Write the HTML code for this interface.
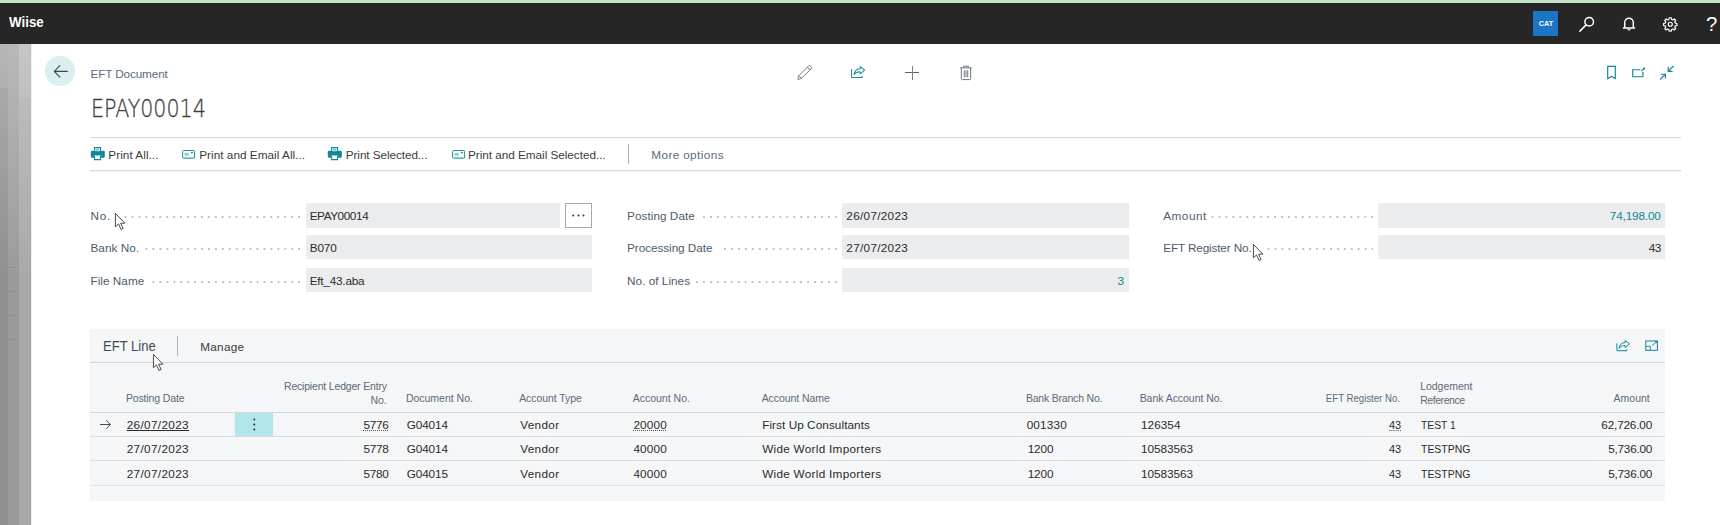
<!DOCTYPE html>
<html lang="en"><head><meta charset="utf-8"><title>EFT Document - EPAY00014</title>
<style>
html,body{margin:0;padding:0;background:#fff;}
body{width:1720px;height:525px;position:relative;overflow:hidden;font-family:"Liberation Sans",sans-serif;}
.b{position:absolute;display:block;}
.t{position:absolute;white-space:pre;display:block;}
.f{position:absolute;height:24.6px;background:#ebecee;}
.d{position:absolute;height:1.6px;background-image:linear-gradient(90deg,#bfc4ca 0,#bfc4ca 1.5px,rgba(191,196,202,0) 1.5px);background-size:6.95px 1.6px;background-repeat:repeat-x;}
</style></head><body>
<!-- top strips -->
<div class="b" style="left:0;top:0;width:1720px;height:3px;background:#c4e3c6"></div>
<div class="b" style="left:0;top:3px;width:1720px;height:40.75px;background:#262626"></div>
<!-- left gray strip -->
<div class="b" style="left:0;top:43.75px;width:8px;height:482px;background:linear-gradient(#b6b6b6 0,#959696 235px,#959696 100%)"></div>
<div class="b" style="left:8px;top:43.75px;width:11px;height:482px;background:linear-gradient(#b9b9b9 0,#9a9a9a 235px,#9a9a9a 100%)"></div>
<div class="b" style="left:19px;top:43.75px;width:12.3px;height:482px;background:linear-gradient(#c6c6c6 0,#aeaeae 235px,#aeaeae 100%)"></div>
<div class="b" style="left:30.4px;top:43.75px;width:0.9px;height:482px;background:linear-gradient(rgba(0,0,0,.02) 0,rgba(0,0,0,.08) 235px)"></div><div class="b" style="left:31.3px;top:43.75px;width:0.6px;height:482px;background:rgba(0,0,0,.06)"></div>
<div class="b" style="left:0;top:88.2px;width:8px;height:437px;background:rgba(0,0,0,.04)"></div>
<div class="b" style="left:19px;top:98.3px;width:11.4px;height:427px;background:rgba(0,0,0,.025)"></div>
<div class="b" style="left:8px;top:267px;width:11px;height:1px;background:#919191"></div>
<div class="b" style="left:8px;top:291px;width:11px;height:1px;background:#919191"></div>
<div class="b" style="left:8px;top:315px;width:11px;height:1px;background:#919191"></div>
<div class="b" style="left:8px;top:339px;width:11px;height:1px;background:#919191"></div>

<!-- CAT badge -->
<div class="b" style="left:1533px;top:11px;width:25px;height:25px;background:#1b74c5"></div>

<!-- top-bar icons -->
<svg class="b" style="left:1578px;top:15px" width="18" height="18" viewBox="0 0 18 18" fill="none" stroke="#fff" stroke-width="1.5"><circle cx="11.2" cy="6.8" r="4.3"/><path d="M8.1 9.9 L1.9 16.1" stroke-linecap="round"/></svg>
<svg class="b" style="left:1621px;top:14.6px" width="16" height="18" viewBox="0 0 16 18" fill="none" stroke="#fff" stroke-width="1.5"><path d="M3.7 13 V7.6 a4.3 4.3 0 0 1 8.6 0 V13 M1.8 13.1 H14.2" /><path d="M6.6 14.3 a1.5 1.1 0 0 0 2.8 0" stroke-width="1.1"/></svg>
<svg class="b" style="left:1661.9px;top:15.5px" width="16.5" height="16.5" viewBox="0 0 18 18" fill="none" stroke="#fff"><circle cx="9" cy="9" r="2.2" stroke-width="1.3"/><path stroke-width="1.3" stroke-linejoin="round" d="M7.9 1.9 h2.2 l.4 1.9 1.3 .55 1.65 -1.1 1.55 1.55 -1.1 1.65 .55 1.3 1.9 .4 v2.2 l-1.9 .4 -.55 1.3 1.1 1.65 -1.55 1.55 -1.65 -1.1 -1.3 .55 -.4 1.9 h-2.2 l-.4 -1.9 -1.3 -.55 -1.65 1.1 -1.55 -1.55 1.1 -1.65 -.55 -1.3 -1.9 -.4 v-2.2 l1.9 -.4 .55 -1.3 -1.1 -1.65 1.55 -1.55 1.65 1.1 1.3 -.55z"/></svg>

<!-- back button -->
<div class="b" style="left:45.3px;top:56.3px;width:29.8px;height:29.8px;border-radius:50%;background:#dbeff3"></div>
<svg class="b" style="left:53px;top:64px" width="16" height="15" viewBox="0 0 16 15" fill="none" stroke="#454545" stroke-width="1.15"><path d="M1.3 7.4 H14.8 M7.2 1.4 L1.3 7.4 L7.2 13.4"/></svg>

<!-- header centre icons -->
<svg class="b" style="left:796px;top:64px" width="18" height="18" viewBox="0 0 18 18" fill="none" stroke="#687482" stroke-width="0.95" stroke-linejoin="round"><path d="M1.8 15.4 L2.9 11.6 L12.4 2.1 a1.45 1.45 0 0 1 2.1 0 l.6 .6 a1.45 1.45 0 0 1 0 2.1 L5.6 14.3 Z M2.9 11.6 L5.6 14.3 M11.3 3.2 L14 5.9"/></svg>
<svg class="b" style="left:850px;top:65px" width="17" height="14" viewBox="0 0 17 14" fill="none" stroke="#1a8d99" stroke-width="1.05" stroke-linejoin="round"><path d="M1.6 4.3 V12.4 H12.2 V11"/><path d="M10.2 1.6 L14.6 5.2 L10.2 8.8 V6.7 C7.4 6.6 5.4 7.6 4.2 9.6 C4.4 6 6.6 3.9 10.2 3.7 Z"/></svg>
<div class="b" style="left:905px;top:72px;width:14.4px;height:1.1px;background:#5a626e"></div>
<div class="b" style="left:911.7px;top:65.6px;width:1px;height:14.2px;background:#7b828d"></div>
<svg class="b" style="left:958px;top:64px" width="16" height="18" viewBox="0 0 16 18" fill="none" stroke="#687482" stroke-width="1"><path d="M2 3.9 H14 M5.7 3.7 V2.2 H10.3 V3.7 M3.3 4.1 V14.6 a1 1 0 0 0 1 1 H11.7 a1 1 0 0 0 1 -1 V4.1"/><path d="M6.3 6.3 V13.3 M8 6.3 V13.3 M9.7 6.3 V13.3" stroke-width="1.1" stroke="#7d8792"/></svg>

<!-- header right icons -->
<svg class="b" style="left:1606px;top:64px" width="12" height="17" viewBox="0 0 12 17" fill="none" stroke="#0f8794" stroke-width="1.15"><path d="M1.7 2.3 H9.3 V14.5 L5.5 12.5 L1.7 14.5 Z"/></svg>
<svg class="b" style="left:1631px;top:65px" width="16" height="14" viewBox="0 0 16 14" fill="none" stroke="#0f8794" stroke-width="1.15"><path d="M9.4 4.7 H1.7 V11.7 H11.9 V7 M10.3 6.2 L12.8 3.8"/><circle cx="13.1" cy="3.6" r="1.1" fill="#0f8794" stroke="none"/></svg>
<svg class="b" style="left:1659px;top:65px" width="16" height="16" viewBox="0 0 16 16" fill="none" stroke="#0f8794" stroke-width="1.15"><path d="M14.6 1 L9.4 6.2 M9.2 2 V6.4 H13.6 M1 14.6 L6.2 9.4 M2 9.2 H6.4 V13.6"/></svg>

<!-- action bar lines -->
<div class="b" style="left:90px;top:137px;width:1591px;height:1.2px;background:#d4d8dc"></div>
<div class="b" style="left:90px;top:170px;width:1591px;height:1.2px;background:#d4d8dc"></div><div class="b" style="left:90px;top:171.2px;width:1591px;height:1px;background:#f1f2f4"></div>
<div class="b" style="left:628px;top:144.3px;width:1px;height:19.4px;background:#aeb2b8"></div>

<!-- action bar icons -->
<svg class="b" id="pr1" style="left:90px;top:146px" width="16" height="15" viewBox="0 0 16 15"><path fill="#0f8794" d="M2.1 4.8 H13.5 a1.3 1.3 0 0 1 1.3 1.3 V10.5 a1.3 1.3 0 0 1 -1.3 1.3 H11.1 V9.5 H4 V11.8 H2.1 a1.3 1.3 0 0 1 -1.3 -1.3 V6.1 a1.3 1.3 0 0 1 1.3 -1.3 Z"/><g fill="none" stroke="#0f8794" stroke-width="1.05"><path d="M4.6 4.8 V1.6 H10.5 V4.8"/><path d="M4.6 9.7 V13.6 H10.5 V9.7"/></g><path d="M5.9 3.5 H9.2" stroke="#6fbcc4" stroke-width="1.2"/><path d="M5.2 5.4 H9.9" stroke="#5fb3bc" stroke-width=".6"/></svg>
<svg class="b" style="left:327px;top:146px" width="16" height="15" viewBox="0 0 16 15"><path fill="#0f8794" d="M2.1 4.8 H13.5 a1.3 1.3 0 0 1 1.3 1.3 V10.5 a1.3 1.3 0 0 1 -1.3 1.3 H11.1 V9.5 H4 V11.8 H2.1 a1.3 1.3 0 0 1 -1.3 -1.3 V6.1 a1.3 1.3 0 0 1 1.3 -1.3 Z"/><g fill="none" stroke="#0f8794" stroke-width="1.05"><path d="M4.6 4.8 V1.6 H10.5 V4.8"/><path d="M4.6 9.7 V13.6 H10.5 V9.7"/></g><path d="M5.9 3.5 H9.2" stroke="#6fbcc4" stroke-width="1.2"/><path d="M5.2 5.4 H9.9" stroke="#5fb3bc" stroke-width=".6"/></svg>
<svg class="b" style="left:181px;top:149px" width="15" height="11" viewBox="0 0 15 11" fill="none" stroke="#0f8794"><rect x="1.6" y="1.55" width="12" height="7.65" rx=".9" stroke="#1a8d99" stroke-width="1"/><rect x="3.5" y="3.9" width="4.2" height="2.7" fill="#8ccbd2" stroke="none"/><rect x="10" y="2.9" width="1.9" height="1.3" fill="#0f8794" stroke="none"/><path d="M2.4 8.2 H12.8" stroke="#7cc4cb" stroke-width=".7"/></svg>
<svg class="b" style="left:450.5px;top:149px" width="15" height="11" viewBox="0 0 15 11" fill="none" stroke="#0f8794"><rect x="1.6" y="1.55" width="12" height="7.65" rx=".9" stroke="#1a8d99" stroke-width="1"/><rect x="3.5" y="3.9" width="4.2" height="2.7" fill="#8ccbd2" stroke="none"/><rect x="10" y="2.9" width="1.9" height="1.3" fill="#0f8794" stroke="none"/><path d="M2.4 8.2 H12.8" stroke="#7cc4cb" stroke-width=".7"/></svg>

<!-- form fields -->
<div class="f" style="left:306px;top:203px;height:24.7px;width:254px"></div>
<div class="f" style="left:306px;top:235.1px;height:24px;width:286px"></div>
<div class="f" style="left:306px;top:267.6px;height:24px;width:286px"></div>
<div class="f" style="left:842px;top:203px;height:24.7px;width:287px"></div>
<div class="f" style="left:842px;top:235.1px;height:24px;width:287px"></div>
<div class="f" style="left:842px;top:267.6px;height:24px;width:287px"></div>
<div class="f" style="left:1378px;top:203px;height:24.7px;width:287px"></div>
<div class="f" style="left:1378px;top:235.1px;height:24px;width:287px"></div>
<div class="b" style="left:565px;top:203px;height:24.7px;width:26.6px;height:24.6px;box-sizing:border-box;border:1px solid #a8a8a8;background:#fff"></div>
<svg class="b" style="left:565px;top:203px" width="27" height="25" viewBox="0 0 27 25"><g fill="#303030"><circle cx="8.3" cy="12.5" r="1"/><circle cx="13.4" cy="12.5" r="1"/><circle cx="18.5" cy="12.5" r="1"/></g></svg>

<!-- dotted leaders -->
<div class="d" style="left:123px;top:216.2px;width:177px;background-position:-5.4px 0"></div>
<div class="d" style="left:144px;top:248.4px;width:156px;background-position:-5.4px 0"></div>
<div class="d" style="left:150px;top:281.1px;width:150px;background-position:-4.4px 0"></div>
<div class="d" style="left:700px;top:216.2px;width:137px;background-position:-3.9px 0"></div>
<div class="d" style="left:721px;top:248.4px;width:116px;background-position:-3.9px 0"></div>
<div class="d" style="left:693px;top:281.1px;width:144px;background-position:-3.9px 0"></div>
<div class="d" style="left:1211px;top:216.2px;width:162px;background-position:-6.35px 0"></div>
<div class="d" style="left:1263px;top:248.4px;width:110px;background-position:-2.4px 0"></div>

<!-- subpage -->
<div class="b" style="left:90px;top:328.8px;width:1575px;height:172px;background:#f5f6f8"></div>
<div class="b" style="left:90px;top:362px;width:1575px;height:1.2px;background:#d3d6da"></div>
<div class="b" style="left:90px;top:412px;width:1575px;height:1.1px;background:#d3d6da"></div>
<div class="b" style="left:90px;top:436px;width:1575px;height:1.1px;background:#d9dcdf"></div>
<div class="b" style="left:90px;top:460.3px;width:1575px;height:1.1px;background:#d9dcdf"></div>
<div class="b" style="left:90px;top:485px;width:1575px;height:1.1px;background:#e1e3e6"></div>
<div class="b" style="left:177.2px;top:336px;width:1px;height:19.5px;background:#aeb2b8"></div>
<div class="b" style="left:235px;top:413px;width:38px;height:23.1px;background:#b1e6eb"></div>
<svg class="b" style="left:235px;top:413px" width="38" height="23" viewBox="0 0 38 23"><g fill="#303030"><circle cx="19.3" cy="6.6" r="1"/><circle cx="19.3" cy="11.6" r="1"/><circle cx="19.3" cy="16.6" r="1"/></g></svg>
<svg class="b" style="left:99px;top:419px" width="13" height="11" viewBox="0 0 13 11" fill="none" stroke="#4a4a4a" stroke-width="1"><path d="M1 5.5 H11.4 M7.2 1.3 L11.4 5.5 L7.2 9.7"/></svg>

<!-- subpage right icons -->
<svg class="b" style="left:1615px;top:338.5px" width="17" height="14" viewBox="0 0 17 14" fill="none" stroke="#0f8794" stroke-width="1" stroke-linejoin="round"><path d="M1.9 4.4 V11.7 H12 V10.4"/><path d="M10.2 1.4 L14.6 5 L10.2 8.6 V6.5 C7.4 6.4 5.4 7.4 4.2 9.4 C4.4 5.8 6.6 3.7 10.2 3.5 Z"/></svg>
<svg class="b" style="left:1644px;top:339px" width="15" height="13" viewBox="0 0 15 13" fill="none" stroke="#0f8794" stroke-width="1"><rect x="1.8" y="2" width="11.6" height="9.3"/><path d="M1.8 7.3 H6.4 V11.3 M8.2 6.6 L12.6 2.7" stroke-width=".9"/><path d="M10.6 2 H13.4 V4.8 Z" fill="#0f8794" stroke="none"/></svg>

<!-- mouse cursors -->
<svg class="b" style="left:114px;top:212px" width="13.3" height="19" viewBox="0 0 14 20"><path d="M1.5 1.5 V15.5 L4.8 12.6 L7.4 18.4 L9.6 17.4 L7 11.8 H11.5 Z" fill="#fff" stroke="#2e2e2e" stroke-width="0.9" stroke-linejoin="round"/></svg>
<svg class="b" style="left:1252px;top:243px" width="13.3" height="19" viewBox="0 0 14 20"><path d="M1.5 1.5 V15.5 L4.8 12.6 L7.4 18.4 L9.6 17.4 L7 11.8 H11.5 Z" fill="#fff" stroke="#2e2e2e" stroke-width="0.9" stroke-linejoin="round"/></svg>
<svg class="b" style="left:152px;top:352.5px" width="13.3" height="19" viewBox="0 0 14 20"><path d="M1.5 1.5 V15.5 L4.8 12.6 L7.4 18.4 L9.6 17.4 L7 11.8 H11.5 Z" fill="#fff" stroke="#2e2e2e" stroke-width="0.9" stroke-linejoin="round"/></svg>

<!-- text -->
<span class="t" style="top:14.00px;font:700 15px/1 'Liberation Sans', sans-serif;color:#ffffff;letter-spacing:0px;transform:scaleX(0.8896);transform-origin:0 0;left:9.00px;">Wiise</span>
<span class="t" style="top:20.00px;font:700 8px/1 'Liberation Sans', sans-serif;color:#ffffff;letter-spacing:0px;transform:scaleX(0.9085);transform-origin:50% 0;left:1495.5px;width:100px;text-align:center;">CAT</span>
<span class="t" style="top:14.00px;font:400 20.3px/1 'Liberation Sans', sans-serif;color:#ffffff;letter-spacing:0px;transform:scaleX(1.0053);transform-origin:0 0;left:1705.99px;">?</span>
<span class="t" style="top:68.00px;font:400 11.75px/1 'Liberation Sans', sans-serif;color:#5a6b80;letter-spacing:-0.137px;word-spacing:0.096px;left:90.45px;">EFT Document</span>
<span class="t" style="top:96.00px;font:200 25.2px/1 'DejaVu Sans', 'Liberation Sans', sans-serif;color:#3c3c3c;letter-spacing:0px;-webkit-text-stroke:0.3px #3c3c3c;transform:scaleX(0.8188);transform-origin:0 0;left:91.18px;">EPAY00014</span>
<span class="t" style="top:149.00px;font:400 11.75px/1 'Liberation Sans', sans-serif;color:#3b3b3b;letter-spacing:0.045px;word-spacing:-0.031px;left:108.35px;">Print All...</span>
<span class="t" style="top:149.00px;font:400 11.75px/1 'Liberation Sans', sans-serif;color:#3b3b3b;letter-spacing:0.045px;word-spacing:-0.031px;left:199.15px;">Print and Email All...</span>
<span class="t" style="top:149.00px;font:400 11.75px/1 'Liberation Sans', sans-serif;color:#3b3b3b;letter-spacing:-0.078px;word-spacing:0.055px;left:345.75px;">Print Selected...</span>
<span class="t" style="top:149.00px;font:400 11.75px/1 'Liberation Sans', sans-serif;color:#3b3b3b;letter-spacing:-0.035px;word-spacing:0.024px;left:468.05px;">Print and Email Selected...</span>
<span class="t" style="top:149.00px;font:400 11.75px/1 'Liberation Sans', sans-serif;color:#5a6b80;letter-spacing:0.434px;word-spacing:-0.304px;left:651.25px;">More options</span>
<span class="t" style="top:210.00px;font:400 11.75px/1 'Liberation Sans', sans-serif;color:#4d5b6c;letter-spacing:0.81px;left:90.45px;">No.</span>
<span class="t" style="top:242.00px;font:400 11.75px/1 'Liberation Sans', sans-serif;color:#4d5b6c;letter-spacing:0.07px;word-spacing:-0.049px;left:90.45px;">Bank No.</span>
<span class="t" style="top:275.00px;font:400 11.75px/1 'Liberation Sans', sans-serif;color:#4d5b6c;letter-spacing:0.035px;word-spacing:-0.025px;left:90.45px;">File Name</span>
<span class="t" style="top:210.00px;font:400 11.75px/1 'Liberation Sans', sans-serif;color:#4d5b6c;letter-spacing:0.05px;word-spacing:-0.035px;left:627.05px;">Posting Date</span>
<span class="t" style="top:242.00px;font:400 11.75px/1 'Liberation Sans', sans-serif;color:#4d5b6c;letter-spacing:-0.058px;word-spacing:0.040px;left:627.05px;">Processing Date</span>
<span class="t" style="top:275.00px;font:400 11.75px/1 'Liberation Sans', sans-serif;color:#4d5b6c;letter-spacing:0.032px;word-spacing:-0.022px;left:627.05px;">No. of Lines</span>
<span class="t" style="top:210.00px;font:400 11.75px/1 'Liberation Sans', sans-serif;color:#4d5b6c;letter-spacing:0.495px;left:1163.25px;">Amount</span>
<span class="t" style="top:242.00px;font:400 11.75px/1 'Liberation Sans', sans-serif;color:#4d5b6c;letter-spacing:-0.158px;word-spacing:0.110px;left:1163.25px;">EFT Register No.</span>
<span class="t" style="top:210.00px;font:400 11.75px/1 'Liberation Sans', sans-serif;color:#2b2b2b;letter-spacing:-0.407px;left:309.65px;">EPAY00014</span>
<span class="t" style="top:242.00px;font:400 11.75px/1 'Liberation Sans', sans-serif;color:#2b2b2b;letter-spacing:-0.094px;left:309.65px;">B070</span>
<span class="t" style="top:275.00px;font:400 11.75px/1 'Liberation Sans', sans-serif;color:#2b2b2b;letter-spacing:-0.213px;left:309.65px;">Eft_43.aba</span>
<span class="t" style="top:210.00px;font:400 11.75px/1 'Liberation Sans', sans-serif;color:#2b2b2b;letter-spacing:0.296px;left:846.35px;">26/07/2023</span>
<span class="t" style="top:242.00px;font:400 11.75px/1 'Liberation Sans', sans-serif;color:#2b2b2b;letter-spacing:0.296px;left:846.35px;">27/07/2023</span>
<span class="t" style="top:275.00px;font:400 11.75px/1 'Liberation Sans', sans-serif;color:#0f8794;letter-spacing:0px;right:595.89px;">3</span>
<span class="t" style="top:210.00px;font:400 11.75px/1 'Liberation Sans', sans-serif;color:#0f8794;letter-spacing:-0.16px;right:59.33px;">74,198.00</span>
<span class="t" style="top:242.00px;font:400 11.75px/1 'Liberation Sans', sans-serif;color:#2b2b2b;letter-spacing:-0.437px;right:59.06px;">43</span>
<span class="t" style="top:339.00px;font:400 14px/1 'Liberation Sans', sans-serif;color:#3f4b5b;letter-spacing:0px;transform:scaleX(0.9322);transform-origin:0 0;left:102.81px;">EFT Line</span>
<span class="t" style="top:341.00px;font:400 11.75px/1 'Liberation Sans', sans-serif;color:#3b3b3b;letter-spacing:0.301px;left:200.15px;">Manage</span>
<span class="t" style="top:393.00px;font:400 10.5px/1 'Liberation Sans', sans-serif;color:#5c6a79;letter-spacing:-0.129px;word-spacing:0.090px;left:125.89px;">Posting Date</span>
<span class="t" style="top:381.00px;font:400 10.5px/1 'Liberation Sans', sans-serif;color:#5c6a79;letter-spacing:-0.198px;word-spacing:0.139px;right:1333.27px;">Recipient Ledger Entry</span>
<span class="t" style="top:395.00px;font:400 10.5px/1 'Liberation Sans', sans-serif;color:#5c6a79;letter-spacing:-0.083px;right:1333.39px;">No.</span>
<span class="t" style="top:393.00px;font:400 10.5px/1 'Liberation Sans', sans-serif;color:#5c6a79;letter-spacing:-0.008px;word-spacing:0.006px;left:405.88px;">Document No.</span>
<span class="t" style="top:393.00px;font:400 10.5px/1 'Liberation Sans', sans-serif;color:#5c6a79;letter-spacing:-0.084px;word-spacing:0.058px;left:519.18px;">Account Type</span>
<span class="t" style="top:393.00px;font:400 10.5px/1 'Liberation Sans', sans-serif;color:#5c6a79;letter-spacing:0.003px;word-spacing:-0.002px;left:632.68px;">Account No.</span>
<span class="t" style="top:393.00px;font:400 10.5px/1 'Liberation Sans', sans-serif;color:#5c6a79;letter-spacing:-0.078px;word-spacing:0.054px;left:761.68px;">Account Name</span>
<span class="t" style="top:393.00px;font:400 10.5px/1 'Liberation Sans', sans-serif;color:#5c6a79;letter-spacing:-0.218px;word-spacing:0.153px;left:1025.88px;">Bank Branch No.</span>
<span class="t" style="top:393.00px;font:400 10.5px/1 'Liberation Sans', sans-serif;color:#5c6a79;letter-spacing:-0.052px;word-spacing:0.036px;left:1139.68px;">Bank Account No.</span>
<span class="t" style="top:393.00px;font:400 10.5px/1 'Liberation Sans', sans-serif;color:#5c6a79;letter-spacing:0px;transform:scaleX(0.9154);transform-origin:100% 0;right:319.82px;">EFT Register No.</span>
<span class="t" style="top:381.00px;font:400 10.5px/1 'Liberation Sans', sans-serif;color:#5c6a79;letter-spacing:-0.037px;left:1420.18px;">Lodgement</span>
<span class="t" style="top:395.00px;font:400 10.5px/1 'Liberation Sans', sans-serif;color:#5c6a79;letter-spacing:-0.437px;left:1420.18px;">Reference</span>
<span class="t" style="top:393.00px;font:400 10.5px/1 'Liberation Sans', sans-serif;color:#5c6a79;letter-spacing:-0.01px;right:70.26px;">Amount</span>
<span class="t" style="top:419.00px;font:400 11.75px/1 'Liberation Sans', sans-serif;color:#2b2b2b;letter-spacing:0.348px;text-decoration:underline;text-underline-offset:1.2px;text-decoration-thickness:1px;text-decoration-skip-ink:none;left:126.65px;">26/07/2023</span>
<span class="t" style="top:419.00px;font:400 11.75px/1 'Liberation Sans', sans-serif;color:#2b2b2b;letter-spacing:-0.291px;text-decoration:underline dotted #555;text-underline-offset:0.5px;text-decoration-thickness:1px;text-decoration-skip-ink:none;right:1331.60px;">5776</span>
<span class="t" style="top:419.00px;font:400 11.75px/1 'Liberation Sans', sans-serif;color:#2b2b2b;letter-spacing:-0.092px;left:406.65px;">G04014</span>
<span class="t" style="top:419.00px;font:400 11.75px/1 'Liberation Sans', sans-serif;color:#2b2b2b;letter-spacing:0.34px;left:520.15px;">Vendor</span>
<span class="t" style="top:419.00px;font:400 11.75px/1 'Liberation Sans', sans-serif;color:#2b2b2b;letter-spacing:0.141px;text-decoration:underline dotted #555;text-underline-offset:0.5px;text-decoration-thickness:1px;text-decoration-skip-ink:none;left:633.45px;">20000</span>
<span class="t" style="top:419.00px;font:400 11.75px/1 'Liberation Sans', sans-serif;color:#2b2b2b;letter-spacing:0.076px;word-spacing:-0.053px;left:762.15px;">First Up Consultants</span>
<span class="t" style="top:419.00px;font:400 11.75px/1 'Liberation Sans', sans-serif;color:#2b2b2b;letter-spacing:0.164px;left:1026.65px;">001330</span>
<span class="t" style="top:419.00px;font:400 11.75px/1 'Liberation Sans', sans-serif;color:#2b2b2b;letter-spacing:0.073px;left:1140.95px;">126354</span>
<span class="t" style="top:419.00px;font:400 11.75px/1 'Liberation Sans', sans-serif;color:#2b2b2b;letter-spacing:0px;text-decoration:underline dotted #555;text-underline-offset:0.5px;text-decoration-thickness:1px;text-decoration-skip-ink:none;transform:scaleX(0.9302);transform-origin:100% 0;right:318.44px;">43</span>
<span class="t" style="top:419.00px;font:400 11.75px/1 'Liberation Sans', sans-serif;color:#2b2b2b;letter-spacing:0px;transform:scaleX(0.8791);transform-origin:0 0;left:1420.99px;">TEST 1</span>
<span class="t" style="top:419.00px;font:400 11.75px/1 'Liberation Sans', sans-serif;color:#2b2b2b;letter-spacing:-0.183px;right:68.01px;">62,726.00</span>
<span class="t" style="top:443.00px;font:400 11.75px/1 'Liberation Sans', sans-serif;color:#2b2b2b;letter-spacing:0.348px;left:126.65px;">27/07/2023</span>
<span class="t" style="top:443.00px;font:400 11.75px/1 'Liberation Sans', sans-serif;color:#2b2b2b;letter-spacing:-0.291px;right:1331.60px;">5778</span>
<span class="t" style="top:443.00px;font:400 11.75px/1 'Liberation Sans', sans-serif;color:#2b2b2b;letter-spacing:-0.092px;left:406.65px;">G04014</span>
<span class="t" style="top:443.00px;font:400 11.75px/1 'Liberation Sans', sans-serif;color:#2b2b2b;letter-spacing:0.34px;left:520.15px;">Vendor</span>
<span class="t" style="top:443.00px;font:400 11.75px/1 'Liberation Sans', sans-serif;color:#2b2b2b;letter-spacing:0.141px;left:633.45px;">40000</span>
<span class="t" style="top:443.00px;font:400 11.75px/1 'Liberation Sans', sans-serif;color:#2b2b2b;letter-spacing:0.316px;word-spacing:-0.221px;left:762.15px;">Wide World Importers</span>
<span class="t" style="top:443.00px;font:400 11.75px/1 'Liberation Sans', sans-serif;color:#2b2b2b;letter-spacing:-0.091px;left:1027.65px;">1200</span>
<span class="t" style="top:443.00px;font:400 11.75px/1 'Liberation Sans', sans-serif;color:#2b2b2b;letter-spacing:-0.021px;left:1140.95px;">10583563</span>
<span class="t" style="top:443.00px;font:400 11.75px/1 'Liberation Sans', sans-serif;color:#2b2b2b;letter-spacing:0px;transform:scaleX(0.9302);transform-origin:100% 0;right:318.44px;">43</span>
<span class="t" style="top:443.00px;font:400 11.75px/1 'Liberation Sans', sans-serif;color:#2b2b2b;letter-spacing:0px;transform:scaleX(0.8891);transform-origin:0 0;left:1420.99px;">TESTPNG</span>
<span class="t" style="top:443.00px;font:400 11.75px/1 'Liberation Sans', sans-serif;color:#2b2b2b;letter-spacing:-0.244px;right:67.95px;">5,736.00</span>
<span class="t" style="top:468.00px;font:400 11.75px/1 'Liberation Sans', sans-serif;color:#2b2b2b;letter-spacing:0.348px;left:126.65px;">27/07/2023</span>
<span class="t" style="top:468.00px;font:400 11.75px/1 'Liberation Sans', sans-serif;color:#2b2b2b;letter-spacing:-0.291px;right:1331.60px;">5780</span>
<span class="t" style="top:468.00px;font:400 11.75px/1 'Liberation Sans', sans-serif;color:#2b2b2b;letter-spacing:-0.092px;left:406.65px;">G04015</span>
<span class="t" style="top:468.00px;font:400 11.75px/1 'Liberation Sans', sans-serif;color:#2b2b2b;letter-spacing:0.34px;left:520.15px;">Vendor</span>
<span class="t" style="top:468.00px;font:400 11.75px/1 'Liberation Sans', sans-serif;color:#2b2b2b;letter-spacing:0.141px;left:633.45px;">40000</span>
<span class="t" style="top:468.00px;font:400 11.75px/1 'Liberation Sans', sans-serif;color:#2b2b2b;letter-spacing:0.316px;word-spacing:-0.221px;left:762.15px;">Wide World Importers</span>
<span class="t" style="top:468.00px;font:400 11.75px/1 'Liberation Sans', sans-serif;color:#2b2b2b;letter-spacing:-0.091px;left:1027.65px;">1200</span>
<span class="t" style="top:468.00px;font:400 11.75px/1 'Liberation Sans', sans-serif;color:#2b2b2b;letter-spacing:-0.021px;left:1140.95px;">10583563</span>
<span class="t" style="top:468.00px;font:400 11.75px/1 'Liberation Sans', sans-serif;color:#2b2b2b;letter-spacing:0px;transform:scaleX(0.9302);transform-origin:100% 0;right:318.44px;">43</span>
<span class="t" style="top:468.00px;font:400 11.75px/1 'Liberation Sans', sans-serif;color:#2b2b2b;letter-spacing:0px;transform:scaleX(0.8891);transform-origin:0 0;left:1420.99px;">TESTPNG</span>
<span class="t" style="top:468.00px;font:400 11.75px/1 'Liberation Sans', sans-serif;color:#2b2b2b;letter-spacing:-0.244px;right:67.95px;">5,736.00</span>
</body></html>
